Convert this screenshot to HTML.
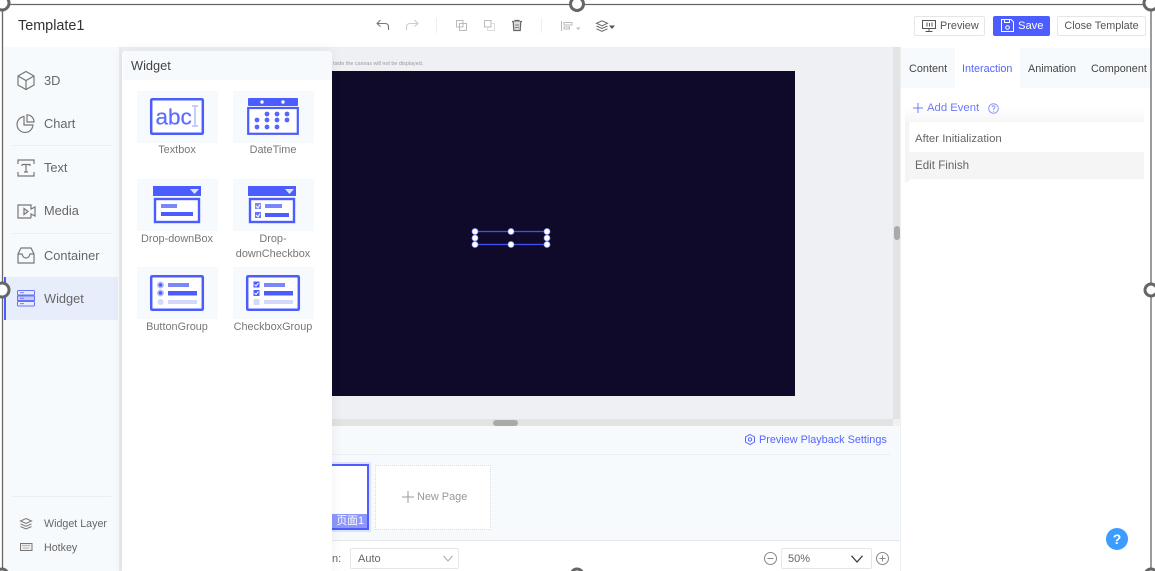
<!DOCTYPE html>
<html><head><meta charset="utf-8"><style>
html,body{margin:0;padding:0;width:1155px;height:571px;overflow:hidden;background:#fff}
#w{position:absolute;left:0;top:0;width:1155px;height:571px;overflow:hidden;background:#fff;filter:blur(.35px);font-family:"Liberation Sans","Noto Sans CJK SC",sans-serif;color:#666}
.a{position:absolute}
.t{position:absolute;white-space:nowrap;line-height:16px}
svg{position:absolute;overflow:visible}
.ib{position:absolute;width:81px;height:52px;background:#f7fafd}
.lb{position:absolute;width:96px;text-align:center;font-size:10.9px;line-height:15px;color:#777}
.btn{position:absolute;top:16px;height:18px;border:1px solid #e6e6e6;border-radius:2px;background:#fff;font-size:10.9px;line-height:18px;color:#555;white-space:nowrap}
</style></head><body><div id="w">
<div class="a" style="left:120px;top:47px;width:773px;height:372px;background:#eef0f4"></div>
<div class="a" style="left:3px;top:47px;width:897px;height:1px;background:#eceef1"></div>
<div class="a" style="left:3px;top:47px;width:116px;height:524px;background:#f7fafd"></div>
<div class="a" style="left:119px;top:47px;width:3px;height:524px;background:#e9ebee"></div>
<div class="a" style="left:332px;top:71px;width:463px;height:325px;background:#0f0a2a"></div>
<div class="t" style="left:333px;top:60px;font-size:5.4px;line-height:9px;color:#999">tside the canvas will not be displayed.</div>
<div class="a" style="left:893px;top:47px;width:7px;height:372px;background:#e3e4e4"></div>
<div class="a" style="left:893px;top:419px;width:7px;height:7px;background:#f0f1f1"></div>
<div class="a" style="left:894px;top:226px;width:6px;height:14px;background:#aaa;border-radius:3px"></div>
<div class="a" style="left:332px;top:419px;width:561px;height:7px;background:#e2e3e3"></div>
<div class="a" style="left:493px;top:420px;width:25px;height:6px;background:#aaa;border-radius:3px"></div>
<div class="a" style="left:332px;top:426px;width:568px;height:114px;background:#f7fafd"></div>
<div class="a" style="left:332px;top:454px;width:558px;height:1px;background:#eceef1"></div>
<div class="a" style="left:332px;top:540px;width:568px;height:1px;background:#e6e8eb"></div>
<div class="a" style="left:900px;top:47px;width:1px;height:524px;background:#eceef1"></div>

<!-- Top bar -->
<div class="t" style="left:18px;top:18px;font-size:14.4px;color:#333">Template1</div>
<svg style="left:376px;top:19px" width="14" height="13" viewBox="0 0 14 13" fill="none" stroke="#777" stroke-width="1.1"><path d="M4.500 1 L1 4.500 L4.500 7.500 M1 4.500 H9 Q12.500 4.500 12.500 8 V11"/></svg>
<svg style="left:405px;top:19px" width="14" height="13" viewBox="0 0 14 13" fill="none" stroke="#ccc" stroke-width="1.1"><path d="M9.500 1 L13 4.500 L9.500 7.500 M13 4.500 H5 Q1.500 4.500 1.500 8 V11"/></svg>
<div class="a" style="left:436px;top:18px;width:1px;height:15px;background:#eee"></div>
<svg style="left:456px;top:20px" width="11" height="11" fill="none" stroke="#bbb"><rect x=".5" y=".5" width="6.500" height="6.500"/><rect x="3.500" y="3.500" width="7" height="7"/></svg>
<svg style="left:484px;top:20px" width="11" height="11" fill="none" stroke="#bbb"><rect x=".5" y=".5" width="6.500" height="6.500"/><path d="M8 3.500 H10.500 V10.500 H3.500 V8" stroke="#ddd"/></svg>
<svg style="left:512px;top:20px" width="10" height="11" fill="none" stroke="#666" stroke-width="1.200"><path d="M0 1.500 H10 M3 1.500 V.5 H7 V1.500"/><path d="M1.200 1.500 L1.800 10.500 H8.200 L8.800 1.500" fill="#ddd"/><path d="M3 5H7M3 7.500H7" stroke-width=".8"/></svg>
<div class="a" style="left:541px;top:18px;width:1px;height:15px;background:#eee"></div>
<svg style="left:561px;top:21px" width="20" height="11" fill="none" stroke="#bbb"><path d="M.5 0 V10 M3 1.500 H11 V4 H3 Z M3 6 H8.500 V8 H3 Z"/><path d="M15 6.500 H19.500 L17.250 9 Z" fill="#bbb" stroke="none"/></svg>
<svg style="left:596px;top:20px" width="20" height="14" fill="none" stroke="#666"><path d="M6 .8 L11.500 3.300 L6 5.800 L.5 3.300 Z M.5 6 L6 8.500 L11.500 6 M.5 8.800 L6 11.300 L11.500 8.800"/><path d="M13 5.500 H19 L16 9 Z" fill="#555" stroke="none"/></svg>

<div class="btn" style="left:914px;width:69px"><svg style="left:7px;top:3px" width="14" height="12" fill="none" stroke="#555"><rect x=".5" y=".5" width="13" height="8"/><path d="M7 9 V11.500 M3.500 11.500 H10.500 M5 2.500 V6.500 M7.500 3 V6.500 M10 2.500 V6.500" /></svg><span style="position:absolute;left:25px">Preview</span></div>
<div class="btn" style="left:993px;width:57px;height:20px;border:0;background:#4c5dff;color:#fff;font-size:11.2px;line-height:20px"><svg style="left:8px;top:3px" width="13" height="13" fill="none" stroke="#fff"><path d="M.5 .5 H10 L12.500 3 V12.500 H.5 Z M3.500 .5 V3.500 H8.500 V.5"/><circle cx="6.500" cy="8.500" r="1.800"/></svg><span style="position:absolute;left:25px">Save</span></div>
<div class="btn" style="left:1057px;width:87px;text-align:center;font-size:10.8px">Close Template</div>

<!-- Sidebar -->
<svg style="left:16px;top:70px" width="20" height="21" viewBox="0 0 20 21" fill="none" stroke="#777" stroke-width="1.200"><path d="M10 1.500 L18 6 V15 L10 19.500 L2 15 V6 Z M2 6 L10 10.500 L18 6 M10 10.500 V19.500"/></svg>
<div class="t" style="left:44px;top:73px;font-size:12.8px">3D</div>
<svg style="left:16px;top:114px" width="20" height="19" viewBox="0 0 20 19" fill="none" stroke="#777" stroke-width="1.200"><path d="M8 2.500 A8 8 0 1 0 17 11 H8 Z M11 .8 A7 7 0 0 1 18 8 H11 Z"/></svg>
<div class="t" style="left:44px;top:116px;font-size:12.8px">Chart</div>
<div class="a" style="left:12px;top:145px;width:99px;height:1px;background:#eceef1"></div>
<svg style="left:17px;top:159px" width="18" height="18" viewBox="0 0 18 18" fill="none" stroke="#777" stroke-width="1.200"><path d="M1 5 V1 H17 V5 M1 13 V17 H17 V13 M5 5.500 H13 V7 M5 5.500 V7 M9 5.500 V13 M7 13 H11"/></svg>
<div class="t" style="left:44px;top:160px;font-size:12.8px">Text</div>
<svg style="left:17px;top:204px" width="19" height="15" viewBox="0 0 19 15" fill="none" stroke="#777" stroke-width="1.200"><path d="M4 1 H1 V14 H14 M1 1 H14 V5 L18 3 V12 L14 10 V14 M7 4.500 L11 7.500 L7 10.500 Z"/></svg>
<div class="t" style="left:44px;top:203px;font-size:12.8px">Media</div>
<div class="a" style="left:12px;top:233px;width:99px;height:1px;background:#eceef1"></div>
<svg style="left:17px;top:247px" width="18" height="17" viewBox="0 0 18 17" fill="none" stroke="#777" stroke-width="1.200"><path d="M1 7 L4 1 H14 L17 7 V16 H1 Z M1 7 H5 Q6 11 9 11 Q12 11 13 7 H17"/></svg>
<div class="t" style="left:44px;top:248px;font-size:12.8px">Container</div>
<div class="a" style="left:4px;top:277px;width:114px;height:43px;background:#e8edfc"></div>
<div class="a" style="left:4px;top:277px;width:2px;height:43px;background:#4c5dff"></div>
<svg style="left:17px;top:290px" width="18" height="17" viewBox="0 0 18 17" fill="none" stroke="#6674f5" stroke-width="1"><rect x=".5" y=".5" width="17" height="4.500" rx="1"/><rect x=".5" y="6" width="17" height="4.500" fill="#c4cbfb"/><rect x=".5" y="11.500" width="17" height="4.500" rx="1"/><path d="M3 2.700 H7 M3 8.200 H7 M3 13.700 H7" stroke-width=".8"/></svg>
<div class="t" style="left:44px;top:291px;font-size:12.8px">Widget</div>
<div class="a" style="left:12px;top:496px;width:99px;height:1px;background:#eceef1"></div>
<svg style="left:20px;top:518px" width="12" height="12" fill="none" stroke="#777"><path d="M6 .5 L11.500 3 L6 5.500 L.5 3 Z M.5 5.800 L6 8.300 L11.500 5.800 M.5 8.500 L6 11 L11.500 8.500"/></svg>
<div class="t" style="left:44px;top:516px;font-size:10.7px">Widget Layer</div>
<svg style="left:20px;top:543px" width="12" height="8" fill="none" stroke="#777"><rect x=".5" y=".5" width="11.500" height="7" fill="#eee"/><path d="M2.500 2.500 H9.500 M3.500 5 H8.500" stroke-dasharray="1 1"/></svg>
<div class="t" style="left:44px;top:540px;font-size:10.7px">Hotkey</div>

<!-- Bottom panel -->
<div class="a" style="left:332px;top:464px;width:37px;height:66px;background:#fff;border:2px solid #4c5dff;border-left:0;box-sizing:border-box;box-shadow:0 0 0 2px #dfe3ff"></div>
<div class="a" style="left:332px;top:514px;width:35px;height:14px;background:#8d97fb;color:#fff;font-size:10.8px;line-height:14px;text-align:right;box-sizing:border-box;padding-right:3px;white-space:nowrap">页面1</div>
<div class="a" style="left:375px;top:465px;width:116px;height:65px;box-sizing:border-box;background:#fff;border:1px dotted #ddd"></div>
<svg style="left:402px;top:491px" width="12" height="12" stroke="#999"><path d="M6 0 V12 M0 6 H12"/></svg>
<div class="t" style="left:417px;top:489px;font-size:10.9px;color:#999">New Page</div>
<svg style="left:745px;top:434px" width="10" height="11" fill="none" stroke="#5566ff"><path d="M5 .5 L9.500 3 V8 L5 10.500 L.5 8 V3 Z"/><circle cx="5" cy="5.500" r="1.700"/></svg>
<div class="t" style="left:759px;top:432px;font-size:10.85px;color:#5566ff">Preview Playback Settings</div>
<div class="t" style="left:332px;top:551px;font-size:11px">n:</div>
<div class="a" style="left:350px;top:548px;width:109px;height:21px;box-sizing:border-box;border:1px solid #e6e6e6;border-radius:2px;background:#fff"></div>
<div class="t" style="left:358px;top:551px;font-size:11px">Auto</div>
<svg style="left:443px;top:555px" width="10" height="7" fill="none" stroke="#aaa"><path d="M.5 1 L5 6 L9.500 1"/></svg>
<svg style="left:764px;top:552px" width="13" height="13" fill="none" stroke="#888"><circle cx="6.500" cy="6.500" r="6"/><path d="M3.500 6.500 H9.500"/></svg>
<div class="a" style="left:781px;top:548px;width:91px;height:21px;box-sizing:border-box;border:1px solid #e6e6e6;border-radius:2px;background:#fff"></div>
<div class="t" style="left:788px;top:551px;font-size:11px">50%</div>
<svg style="left:851px;top:555px" width="12" height="8" fill="none" stroke="#333" stroke-width="1.200"><path d="M.5 .8 L6 7 L11.500 .8"/></svg>
<svg style="left:876px;top:552px" width="13" height="13" fill="none" stroke="#888"><circle cx="6.500" cy="6.500" r="6"/><path d="M3.500 6.500 H9.500 M6.500 3.500 V9.500"/></svg>

<!-- Widget panel -->
<div class="a" style="left:122px;top:51px;width:210px;height:520px;background:#fff;border-radius:4px 4px 0 0;box-shadow:0 0 12px rgba(0,0,0,.07)"></div>
<div class="a" style="left:123px;top:51px;width:209px;height:29px;background:#f7fafd;border-radius:4px 4px 0 0"></div>
<div class="t" style="left:131px;top:58px;font-size:12.8px;color:#444">Widget</div>
<div class="ib" style="left:137px;top:91px"></div><div class="ib" style="left:233px;top:91px"></div>
<div class="ib" style="left:137px;top:179px"></div><div class="ib" style="left:233px;top:179px"></div>
<div class="ib" style="left:137px;top:267px"></div><div class="ib" style="left:233px;top:267px"></div>

<svg style="left:150px;top:98px" width="54" height="37"><rect x="1.200" y="1.200" width="51.600" height="34.600" fill="#fff" stroke="#4c5dff" stroke-width="2.500" rx="1"/><text x="5.500" y="26.500" font-family="Liberation Sans" font-size="22.500" fill="#5d6dff" stroke="#5d6dff" stroke-width=".2">abc</text><path d="M45 8 V28 M42 8 H48 M42 28 H48" stroke="#c6ccfb" stroke-width="2"/></svg>
<div class="lb" style="left:129px;top:143px">Textbox</div>
<svg style="left:247px;top:98px" width="52" height="37"><rect x="1" y="0" width="50" height="8" fill="#4c5dff" rx="1"/><circle cx="15" cy="4" r="1.700" fill="#fff"/><circle cx="36" cy="4" r="1.700" fill="#fff"/><rect x="1.200" y="10" width="49.600" height="25.800" fill="#fff" stroke="#4c5dff" stroke-width="2.200"/><g fill="#5566ff"><circle cx="20" cy="16" r="2.400"/><circle cx="30" cy="16" r="2.400"/><circle cx="40" cy="16" r="2.400"/><circle cx="10" cy="22" r="2.400"/><circle cx="20" cy="22" r="2.400"/><circle cx="30" cy="22" r="2.400"/><circle cx="40" cy="22" r="2.400"/><circle cx="10" cy="29" r="2.400"/><circle cx="20" cy="29" r="2.400"/><circle cx="30" cy="29" r="2.400"/></g></svg>
<div class="lb" style="left:225px;top:143px">DateTime</div>

<svg style="left:153px;top:186px" width="48" height="37"><rect x="0" y="0" width="48" height="10" fill="#4c5dff"/><path d="M37 3 H46 L41.500 8 Z" fill="#dfe3ff"/><rect x="2" y="13" width="44" height="23" fill="#fff" stroke="#4c5dff" stroke-width="2.400"/><rect x="8" y="18" width="16" height="4" fill="#7a87fb"/><rect x="8" y="26" width="32" height="4" fill="#4c5dff"/></svg>
<div class="lb" style="left:129px;top:232px">Drop-downBox</div>
<svg style="left:248px;top:186px" width="48" height="37"><rect x="0" y="0" width="48" height="10" fill="#4c5dff"/><path d="M37 3 H46 L41.500 8 Z" fill="#dfe3ff"/><rect x="2" y="13" width="44" height="23" fill="#fff" stroke="#4c5dff" stroke-width="2.400"/><rect x="7" y="17" width="6" height="6" fill="#7a87fb"/><rect x="7" y="26" width="6" height="6" fill="#6674f5"/><path d="M8 20 L10 22 L12 18.500 M8 29 L10 31 L12 27.500" stroke="#fff" fill="none"/><rect x="17" y="18" width="17" height="4" fill="#7a87fb"/><rect x="17" y="27" width="24" height="4" fill="#4c5dff"/></svg>
<div class="lb" style="left:225px;top:232px">Drop-<br>downCheckbox</div>

<svg style="left:150px;top:275px" width="54" height="36"><rect x="1.200" y="1.200" width="51.600" height="33.600" fill="#fff" stroke="#4c5dff" stroke-width="2.500" rx="1"/><circle cx="10.500" cy="10" r="3.500" fill="#b7bffb"/><circle cx="10.500" cy="10" r="1.800" fill="#4c5dff"/><circle cx="10.500" cy="18" r="3.500" fill="#b7bffb"/><circle cx="10.500" cy="18" r="1.800" fill="#4c5dff"/><circle cx="10.500" cy="27" r="3" fill="#d3d8fc"/><rect x="18" y="8" width="21" height="4" fill="#7a87fb"/><rect x="18" y="16" width="29" height="4.500" fill="#4c5dff"/><rect x="18" y="25" width="29" height="4" fill="#d3d8fc"/></svg>
<div class="lb" style="left:129px;top:320px">ButtonGroup</div>
<svg style="left:246px;top:275px" width="54" height="36"><rect x="1.200" y="1.200" width="51.600" height="33.600" fill="#fff" stroke="#4c5dff" stroke-width="2.500" rx="1"/><rect x="7.500" y="6.500" width="6" height="6" fill="#4c5dff"/><rect x="7.500" y="15" width="6" height="6" fill="#4c5dff"/><path d="M8.500 9.500 L10 11 L12.500 8 M8.500 18 L10 19.500 L12.500 16.500" stroke="#fff" fill="none"/><rect x="7.500" y="24" width="6" height="6" fill="#d3d8fc"/><rect x="18" y="8" width="21" height="4" fill="#7a87fb"/><rect x="18" y="16" width="29" height="4.500" fill="#4c5dff"/><rect x="18" y="25" width="29" height="4" fill="#d3d8fc"/></svg>
<div class="lb" style="left:225px;top:320px">CheckboxGroup</div>

<!-- Right panel -->
<div class="a" style="left:901px;top:48px;width:250px;height:40px;background:#f7fafd"></div>
<div class="a" style="left:955px;top:48px;width:65px;height:41px;background:#fff"></div>
<div class="t" style="left:909px;top:61px;font-size:10.9px;color:#444">Content</div>
<div class="t" style="left:962px;top:61px;font-size:10.8px;color:#5566ff">Interaction</div>
<div class="t" style="left:1028px;top:61px;font-size:10.8px;color:#444">Animation</div>
<div class="t" style="left:1091px;top:61px;font-size:10.8px;color:#444">Component</div>
<div class="a" style="left:905px;top:108px;width:239px;height:14px;background:linear-gradient(#fff,#f6f6f6)"></div>
<svg style="left:913px;top:103px" width="10" height="10" stroke="#6b7aff"><path d="M5 0 V10 M0 5 H10"/></svg>
<div class="t" style="left:927px;top:100px;font-size:11.3px;color:#6b7aff">Add Event</div>
<svg style="left:988px;top:103px" width="11" height="11" fill="none" stroke="#8d97fb"><circle cx="5.500" cy="5.500" r="4.800"/><path d="M4 4.300 Q4 2.800 5.500 2.800 Q7 2.800 7 4.200 Q7 5 5.500 5.800 V6.800 M5.500 7.800 V8.800"/></svg>
<div class="a" style="left:905px;top:122px;width:4px;height:60px;background:#f4f4f4"></div>
<div class="a" style="left:909px;top:152px;width:235px;height:27px;background:#f5f5f5"></div>
<div class="t" style="left:915px;top:131px;font-size:11.4px">After Initialization</div>
<div class="t" style="left:915px;top:158px;font-size:11.6px">Edit Finish</div>
<div class="a" style="left:1106px;top:528px;width:22px;height:22px;border-radius:50%;background:#3c9cff;color:#fff;font-size:14px;font-weight:bold;line-height:22px;text-align:center">?</div>

<!-- Selection on canvas + outer frame -->
<svg style="left:0;top:0" width="1155" height="571" fill="none">
<rect x="475" y="231.500" width="72" height="13" stroke="#3f50f0" stroke-width="1.300"/>
<g fill="#fff" stroke="#8f98ff" stroke-width=".7"><circle cx="475" cy="231.500" r="3"/><circle cx="511" cy="231.500" r="3"/><circle cx="547" cy="231.500" r="3"/><circle cx="475" cy="238" r="3"/><circle cx="547" cy="238" r="3"/><circle cx="475" cy="244.500" r="3"/><circle cx="511" cy="244.500" r="3"/><circle cx="547" cy="244.500" r="3"/></g>
<path d="M2.500 571 V4.500 H1151 V571" stroke="#666" stroke-width="1.300"/>
<g fill="#fff" stroke="#666" stroke-width="3"><circle cx="2" cy="3" r="7"/><circle cx="577" cy="4" r="6.500"/><circle cx="1151" cy="3" r="7"/><circle cx="2" cy="290" r="7"/><circle cx="1151" cy="290" r="6"/><circle cx="2" cy="575" r="6"/><circle cx="577" cy="575" r="6"/><circle cx="1151" cy="575" r="6"/></g>
</svg>
</div></body></html>
